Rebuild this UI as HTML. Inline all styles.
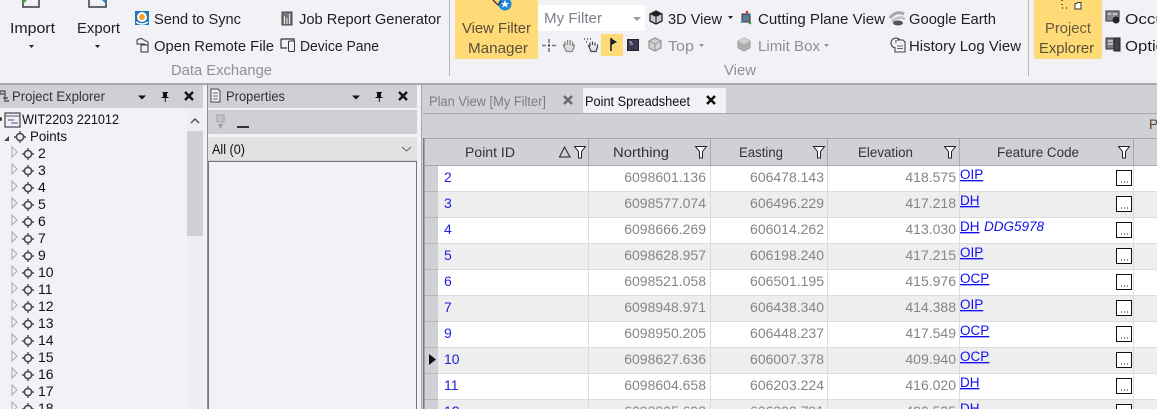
<!DOCTYPE html>
<html><head><meta charset="utf-8"><style>
html,body{margin:0;padding:0;background:#f1f1f6;width:1157px;height:409px;overflow:hidden}
svg{display:block;font-family:"Liberation Sans",sans-serif}
.r{font-size:14.5px;fill:#1e1e28}
.g{font-size:14.5px;fill:#8f8f98}
.t{font-size:13.5px;fill:#111}
.d{font-size:14px;fill:#111}
.n{font-size:14px;fill:#85858a;text-anchor:end}
.h{font-size:13.5px;fill:#333}
.l{font-size:13.5px;fill:#1010f0;text-decoration:underline}
.i{font-size:14px;fill:#2222dd}
</style></head><body>
<svg width="1157" height="409" viewBox="0 0 1157 409" xmlns="http://www.w3.org/2000/svg">
<defs>
<g id="tg"><circle cx="0" cy="0" r="3.6" fill="none" stroke="#4a4a58" stroke-width="1.6"/><path d="M0-6V-3.5M0 3.5V6M-6 0H-3.5M3.5 0H6" stroke="#4a4a58" stroke-width="1.4"/></g>
<path id="ex" d="M0-5L5 0L0 5Z" fill="#f4f4f8" stroke="#a8a8ac"/>
<path id="fl" d="M0.5 0.5H11.5L7.5 5.5V12H4.5V5.5Z" fill="#fff" stroke="#222" stroke-width="1"/>
<g id="bt"><rect x="0.5" y="0.5" width="15" height="15" fill="#fff" stroke="#111"/><path d="M5 12h1M8 12h1M11 12h1" stroke="#111"/></g>
<g id="pin"><path d="M-2.5-4H3V-3H2V1H3.5V2H.8V6H-.2V2H-3.5V1H-2V-3H-2.5Z" fill="#111"/></g>
<path id="cl" d="M-4-4L4 4M4-4L-4 4" stroke="#111" stroke-width="2.4" fill="none"/>
<path id="dd" d="M-4-1.5H4L0 2.5Z" fill="#111"/>
</defs>

<!-- ribbon -->
<rect width="1157" height="83" fill="#f1f1f6"/>
<rect y="83" width="1157" height="2" fill="#a8a8a8"/>
<path d="M23 0V7H39V0" fill="none" stroke="#3a3a46" stroke-width="1.5"/><path d="M23 0H27L23 4Z" fill="#3f9a3f"/>
<path d="M89 0V7H106V0" fill="none" stroke="#3a3a46" stroke-width="1.5"/><path d="M106 0V4L102 0Z" fill="#1e88d8"/>
<text x="10" y="33" class="r" textLength="45" lengthAdjust="spacingAndGlyphs">Import</text>
<text x="77" y="33" class="r" textLength="43" lengthAdjust="spacingAndGlyphs">Export</text>
<path d="M29 45H34L31.500 48Z M95 45H100L97.500 48Z" fill="#222"/>

<rect x="135" y="11" width="14" height="14" fill="#1e74b8"/><circle cx="142" cy="17" r="4" fill="#f5a01e" stroke="#fff" stroke-width="2"/><path d="M136 22Q142 26 148 22" stroke="#fff" stroke-width="1.500" fill="none"/>
<text x="154" y="24" class="r" textLength="87" lengthAdjust="spacingAndGlyphs">Send to Sync</text>
<path d="M137 40Q141 37 144 40L148 42V46L144 44H137Z" fill="none" stroke="#555" stroke-width="1.200"/><rect x="141" y="45" width="7" height="7" fill="#f1f1f6" stroke="#333"/>
<text x="154" y="51" class="r" textLength="120" lengthAdjust="spacingAndGlyphs">Open Remote File</text>
<rect x="282" y="12" width="10" height="13" fill="#777" stroke="#444"/><path d="M284.500 16V24M287 18V24M289.500 14V24" stroke="#eee"/>
<text x="299" y="24" class="r" textLength="142" lengthAdjust="spacingAndGlyphs">Job Report Generator</text>
<path d="M281 39H294V41M281 39V48H287" fill="none" stroke="#333" stroke-width="1.200"/><rect x="288.500" y="41" width="6" height="10.500" rx="1" fill="#f1f1f6" stroke="#333"/>
<text x="300" y="51" class="r" textLength="79" lengthAdjust="spacingAndGlyphs">Device Pane</text>
<text x="171" y="75" class="g" textLength="101" lengthAdjust="spacingAndGlyphs">Data Exchange</text>
<rect x="449" y="0" width="1" height="76" fill="#b8b8bc"/>

<rect x="455" y="0" width="83" height="59" fill="#ffdb78"/>
<circle cx="505" cy="4" r="6.500" fill="#1e88d8"/><path d="M505 0L506.200 3H509L506.800 4.800L507.600 7.500L505 6L502.400 7.500L503.200 4.800L501 3H503.800Z" fill="#fff"/><path d="M493 0L498 5L501 1" fill="none" stroke="#333" stroke-width="1.300"/>
<text x="462" y="33" class="r" style="fill:#5c4e38" textLength="69" lengthAdjust="spacingAndGlyphs">View Filter</text>
<text x="468" y="53" class="r" style="fill:#5c4e38" textLength="60" lengthAdjust="spacingAndGlyphs">Manager</text>

<rect x="538" y="5" width="107" height="26" fill="#fff"/>
<text x="544" y="23" class="r" style="fill:#7f8088" textLength="58" lengthAdjust="spacingAndGlyphs">My Filter</text>
<path d="M633 17H641L637 21Z" fill="#9a9aa0"/>
<path d="M656 11L662 14V21L656 24L650 21V14Z" fill="#c8c8d0" stroke="#222" stroke-width="1.300"/><path d="M650 14L656 17L662 14L656 11Z" fill="#222"/><path d="M656 17V24" stroke="#222"/>
<text x="668" y="24" class="r" textLength="54" lengthAdjust="spacingAndGlyphs">3D View</text>
<path d="M728 16H733L730.500 19Z" fill="#222"/>
<path d="M742 14H750V22H742Z" fill="#77777f" stroke="#333"/><path d="M741 23L750 14" stroke="#1e88d8" stroke-width="1.200"/><circle cx="747" cy="12" r="1.300" fill="#d33"/><circle cx="750" cy="23" r="1.300" fill="#3a9a3a"/>
<text x="758" y="24" class="r" textLength="127" lengthAdjust="spacingAndGlyphs">Cutting Plane View</text>
<path d="M890 18Q896 10 904 14" stroke="#a8a8a8" stroke-width="3" fill="none"/><path d="M892 22Q898 15 905 19" stroke="#c0c0c0" stroke-width="2.500" fill="none"/><ellipse cx="898" cy="23" rx="5" ry="2.500" fill="#555"/>
<text x="909" y="24" class="r" textLength="87" lengthAdjust="spacingAndGlyphs">Google Earth</text>

<path d="M549 39V43M549 48V52M542 45.500H546M552 45.500H556" stroke="#777" stroke-width="1.600"/><rect x="548" y="44.500" width="2" height="2" fill="#333"/>
<path d="M565 46V41.500M567.500 45V40M570 45V40M572.500 46V41.500M565 46L564 44.500Q563 45 564 47L566.500 51.500H572L574 47.500V44" fill="#ddd" stroke="#888" stroke-width="1.300"/>
<path d="M584 39h1M587 39h1M590 39h1M586 42h1" stroke="#222" stroke-width="1.200"/><path d="M590 46V42.500M592.500 45V41.500M595 45.500V42.500M590 46L588.500 45.500L591 51.500H596L597.500 47V44.500" fill="#e2e2ea" stroke="#444" stroke-width="1.200"/>
<rect x="601" y="34" width="22" height="22" fill="#ffdb78"/>
<path d="M611 38V51" stroke="#222" stroke-width="1.600"/><path d="M611.500 38.500L617 42L611.500 45Z" fill="#222"/>
<rect x="627.500" y="39.500" width="11" height="11" fill="#3a3a50" stroke="#222"/><path d="M629 42H632M630 44H633" stroke="#ccc"/>
<path d="M655 38L661 41V48L655 51L649 48V41Z" fill="#d2d2d2" stroke="#9a9a9a" stroke-width="1.300"/><path d="M649 41L655 44L661 41M655 44V51" stroke="#9a9a9a" fill="none"/>
<text x="668" y="51" class="g" textLength="26" lengthAdjust="spacingAndGlyphs">Top</text>
<path d="M699 44H704L701.500 47Z" fill="#8f8f98"/>
<path d="M744 38L750 41V48L744 51L738 48V41Z" fill="#b0b0b0" stroke="#9a9a9a"/><path d="M738 41L744 44L750 41L744 38Z" fill="#d4d4d4"/>
<text x="758" y="51" class="g" textLength="62" lengthAdjust="spacingAndGlyphs">Limit Box</text>
<path d="M824 44H829L826.500 47Z" fill="#8f8f98"/>
<circle cx="896" cy="43" r="5" fill="#f1f1f6" stroke="#444" stroke-width="1.100"/><path d="M896 40V43H899" stroke="#444" fill="none"/><path d="M897 40H903L905 42V52H895V47" fill="#f1f1f6" stroke="#444" stroke-width="1.100"/><path d="M897 46H903M897 48.500H903" stroke="#666"/>
<text x="909" y="51" class="r" textLength="112" lengthAdjust="spacingAndGlyphs">History Log View</text>
<text x="724" y="75" class="g" textLength="32" lengthAdjust="spacingAndGlyphs">View</text>
<rect x="1028" y="0" width="1" height="76" fill="#b8b8bc"/>

<rect x="1034" y="0" width="68" height="59" fill="#ffdb78"/>
<path d="M1062 0V1M1062 4V5M1062 8H1063M1066 8H1067" stroke="#333" stroke-width="1.400"/><path d="M1075 4L1078 2.500H1081V9H1075Z" fill="#fff" stroke="#333"/>
<text x="1045" y="33" class="r" style="fill:#6a5a40" textLength="46" lengthAdjust="spacingAndGlyphs">Project</text>
<text x="1039" y="53" class="r" style="fill:#5c4e38" textLength="55" lengthAdjust="spacingAndGlyphs">Explorer</text>
<rect x="1106" y="11" width="13" height="10" fill="#8a8a92" stroke="#333"/><circle cx="1116" cy="20" r="3.500" fill="#222"/><path d="M1108 14H1111M1113 14H1117" stroke="#fff"/>
<text x="1125" y="24" class="r" textLength="40" lengthAdjust="spacingAndGlyphs">Occu</text>
<rect x="1106" y="38" width="10" height="11" fill="#7a7a82" stroke="#333"/><rect x="1114" y="38" width="6" height="13" fill="#444" stroke="#222"/><path d="M1108 41H1113M1108 44H1113" stroke="#fff"/>
<text x="1125" y="51" class="r" textLength="40" lengthAdjust="spacingAndGlyphs">Optio</text>

<!-- panels bg -->
<rect y="85" width="1157" height="324" fill="#d0d1d6"/>
<!-- project explorer -->
<rect x="0" y="85" width="203" height="23" fill="#cfd0d5"/>
<rect x="0" y="108" width="203" height="301" fill="#f1f1f6"/>
<rect x="187" y="108" width="16" height="301" fill="#eeeef2"/>
<rect x="187" y="131" width="16" height="105" fill="#cfd0d5"/>
<path d="M191 123L195 119L199 123" fill="none" stroke="#555" stroke-width="1.500"/>
<path d="M0 91H5V94H0ZM3 98H8M5 94V102M6 101H9" fill="none" stroke="#444" stroke-width="1.200"/>
<text x="12" y="101" class="t" style="fill:#333" textLength="93" lengthAdjust="spacingAndGlyphs">Project Explorer</text>
<use href="#dd" x="142" y="97"/><use href="#pin" x="165" y="96"/><use href="#cl" x="189" y="96"/>
<circle cx="0" cy="119" r="2" fill="#333"/>
<rect x="5" y="113" width="15" height="14" fill="#eef" stroke="#444" stroke-width="1.200"/><path d="M5 116H20M8 120H14M11 123H18" stroke="#555"/>
<text x="22" y="124" class="t" textLength="97" lengthAdjust="spacingAndGlyphs">WIT2203 221012</text>
<path d="M4 141L9 136V141Z" fill="#444"/>
<use href="#tg" x="20" y="137"/>
<text x="30" y="141" class="t" textLength="37" lengthAdjust="spacingAndGlyphs">Points</text>
<g class="d">
<use href="#ex" x="12" y="152"/><use href="#tg" x="28" y="154"/><text x="38" y="158">2</text>
<use href="#ex" x="12" y="169"/><use href="#tg" x="28" y="171"/><text x="38" y="175">3</text>
<use href="#ex" x="12" y="186"/><use href="#tg" x="28" y="188"/><text x="38" y="192">4</text>
<use href="#ex" x="12" y="203"/><use href="#tg" x="28" y="205"/><text x="38" y="209">5</text>
<use href="#ex" x="12" y="220"/><use href="#tg" x="28" y="222"/><text x="38" y="226">6</text>
<use href="#ex" x="12" y="237"/><use href="#tg" x="28" y="239"/><text x="38" y="243">7</text>
<use href="#ex" x="12" y="254"/><use href="#tg" x="28" y="256"/><text x="38" y="260">9</text>
<use href="#ex" x="12" y="271"/><use href="#tg" x="28" y="273"/><text x="38" y="277">10</text>
<use href="#ex" x="12" y="288"/><use href="#tg" x="28" y="290"/><text x="38" y="294">11</text>
<use href="#ex" x="12" y="305"/><use href="#tg" x="28" y="307"/><text x="38" y="311">12</text>
<use href="#ex" x="12" y="322"/><use href="#tg" x="28" y="324"/><text x="38" y="328">13</text>
<use href="#ex" x="12" y="339"/><use href="#tg" x="28" y="341"/><text x="38" y="345">14</text>
<use href="#ex" x="12" y="356"/><use href="#tg" x="28" y="358"/><text x="38" y="362">15</text>
<use href="#ex" x="12" y="373"/><use href="#tg" x="28" y="375"/><text x="38" y="379">16</text>
<use href="#ex" x="12" y="390"/><use href="#tg" x="28" y="392"/><text x="38" y="396">17</text>
<use href="#ex" x="12" y="407"/><use href="#tg" x="28" y="409"/><text x="38" y="413">18</text>
</g>
<rect x="203" y="85" width="4" height="324" fill="#f1f1f6"/>
<rect x="207" y="85" width="1" height="324" fill="#8e8e92"/>

<!-- properties -->
<rect x="208" y="85" width="210" height="324" fill="#cfd0d5"/>
<rect x="208" y="108" width="209" height="2" fill="#f1f1f6"/>
<rect x="208" y="134" width="209" height="3" fill="#f1f1f6"/>
<path d="M211 89H218L220 91V102H211Z" fill="#f1f1f6" stroke="#444"/><path d="M213 93H218M213 96H218M213 99H218" stroke="#666"/>
<text x="226" y="101" class="t" style="fill:#333" textLength="59" lengthAdjust="spacingAndGlyphs">Properties</text>
<use href="#dd" x="356" y="97"/><use href="#pin" x="379" y="96"/><use href="#cl" x="403" y="96"/>
<rect x="217" y="115" width="7" height="7" fill="#c4c4c8" stroke="#a4a4a8"/><path d="M218 124H223L220.500 129Z" fill="#9a9a9e"/>
<rect x="237" y="126" width="12" height="2" fill="#333"/>
<rect x="208" y="137" width="209" height="23" fill="#e1e1e1"/>
<text x="212" y="154" class="t" textLength="33" lengthAdjust="spacingAndGlyphs">All (0)</text>
<path d="M402 147L406.500 151L411 147" fill="none" stroke="#666"/>
<rect x="208.500" y="161.500" width="208" height="250" fill="#f1f1f6" stroke="#777"/>
<rect x="417" y="85" width="4" height="324" fill="#f1f1f6"/>
<rect x="421" y="85" width="1" height="324" fill="#a8a8ac"/>

<!-- main area -->
<rect x="422" y="85" width="735" height="324" fill="#d0d1d6"/>
<rect x="583" y="88" width="143" height="25" fill="#f1f1f6"/>
<text x="429" y="106" class="t" style="fill:#7c7c84" textLength="117" lengthAdjust="spacingAndGlyphs">Plan View [My Filter]</text>
<use href="#cl" x="568" y="100" style="opacity:.55"/>
<text x="585" y="106" class="t" textLength="105" lengthAdjust="spacingAndGlyphs">Point Spreadsheet</text>
<use href="#cl" x="711" y="100"/>
<rect x="423" y="113" width="734" height="1" fill="#a8a8ac"/>
<rect x="423" y="138" width="734" height="1" fill="#a8a8ac"/>
<text x="1149" y="129" class="t" style="fill:#5a4020">P</text>

<!-- rows -->
<rect x="438" y="166" width="719" height="25" fill="#fff"/>
<rect x="438" y="192" width="719" height="25" fill="#eeeeee"/>
<rect x="438" y="218" width="719" height="25" fill="#fff"/>
<rect x="438" y="244" width="719" height="25" fill="#eeeeee"/>
<rect x="438" y="270" width="719" height="25" fill="#fff"/>
<rect x="438" y="296" width="719" height="25" fill="#eeeeee"/>
<rect x="438" y="322" width="719" height="25" fill="#fff"/>
<rect x="438" y="348" width="719" height="25" fill="#eeeeee"/>
<rect x="438" y="374" width="719" height="25" fill="#fff"/>
<rect x="438" y="400" width="719" height="9" fill="#eeeeee"/>
<path d="M438 191.500H1157M438 217.500H1157M438 243.500H1157M438 269.500H1157M438 295.500H1157M438 321.500H1157M438 347.500H1157M438 373.500H1157M438 399.500H1157" stroke="#dcdcdc"/>
<path d="M588.500 166V409M710.500 166V409M827.500 166V409M959.500 166V409M1133.500 166V409" stroke="#dcdcdc"/>
<path d="M424 191.500H438M424 217.500H438M424 243.500H438M424 269.500H438M424 295.500H438M424 321.500H438M424 347.500H438M424 373.500H438M424 399.500H438" stroke="#b8b8bc"/>
<rect x="423" y="138" width="1.500" height="271" fill="#77777b"/>
<rect x="424" y="165" width="733" height="1" fill="#a8a8ac"/>
<path d="M588.500 139V165M710.500 139V165M827.500 139V165M959.500 139V165M1133.500 139V165" stroke="#a8a8ac"/>
<path d="M429 354L436 359.500L429 365Z" fill="#111"/>

<!-- header -->
<text x="465" y="157" class="h" textLength="50" lengthAdjust="spacingAndGlyphs">Point ID</text>
<path d="M559.500 157L564.500 147L570 157Z" fill="none" stroke="#222"/>
<use href="#fl" x="574" y="146"/>
<text x="613" y="157" class="h" textLength="56" lengthAdjust="spacingAndGlyphs">Northing</text>
<use href="#fl" x="695" y="146"/>
<text x="739" y="157" class="h" textLength="44" lengthAdjust="spacingAndGlyphs">Easting</text>
<use href="#fl" x="813" y="146"/>
<text x="858" y="157" class="h" textLength="55" lengthAdjust="spacingAndGlyphs">Elevation</text>
<use href="#fl" x="944" y="146"/>
<text x="997" y="157" class="h" textLength="82" lengthAdjust="spacingAndGlyphs">Feature Code</text>
<use href="#fl" x="1118" y="146"/>

<!-- data -->
<text x="444" y="182" class="i">2</text><text x="706" y="182" class="n">6098601.136</text><text x="824" y="182" class="n">606478.143</text><text x="956" y="182" class="n">418.575</text><text x="960" y="179" class="l">OIP</text><use href="#bt" x="1116" y="170"/>
<text x="444" y="208" class="i">3</text><text x="706" y="208" class="n">6098577.074</text><text x="824" y="208" class="n">606496.229</text><text x="956" y="208" class="n">417.218</text><text x="960" y="205" class="l">DH</text><use href="#bt" x="1116" y="196"/>
<text x="444" y="234" class="i">4</text><text x="706" y="234" class="n">6098666.269</text><text x="824" y="234" class="n">606014.262</text><text x="956" y="234" class="n">413.030</text><text x="960" y="231" class="l">DH</text><text x="984" y="231" style="font-size:13.5px;font-style:italic;fill:#1010f0">DDG5978</text><use href="#bt" x="1116" y="222"/>
<text x="444" y="260" class="i">5</text><text x="706" y="260" class="n">6098628.957</text><text x="824" y="260" class="n">606198.240</text><text x="956" y="260" class="n">417.215</text><text x="960" y="257" class="l">OIP</text><use href="#bt" x="1116" y="248"/>
<text x="444" y="286" class="i">6</text><text x="706" y="286" class="n">6098521.058</text><text x="824" y="286" class="n">606501.195</text><text x="956" y="286" class="n">415.976</text><text x="960" y="283" class="l">OCP</text><use href="#bt" x="1116" y="274"/>
<text x="444" y="312" class="i">7</text><text x="706" y="312" class="n">6098948.971</text><text x="824" y="312" class="n">606438.340</text><text x="956" y="312" class="n">414.388</text><text x="960" y="309" class="l">OIP</text><use href="#bt" x="1116" y="300"/>
<text x="444" y="338" class="i">9</text><text x="706" y="338" class="n">6098950.205</text><text x="824" y="338" class="n">606448.237</text><text x="956" y="338" class="n">417.549</text><text x="960" y="335" class="l">OCP</text><use href="#bt" x="1116" y="326"/>
<text x="444" y="364" class="i">10</text><text x="706" y="364" class="n">6098627.636</text><text x="824" y="364" class="n">606007.378</text><text x="956" y="364" class="n">409.940</text><text x="960" y="361" class="l">OCP</text><use href="#bt" x="1116" y="352"/>
<text x="444" y="390" class="i">11</text><text x="706" y="390" class="n">6098604.658</text><text x="824" y="390" class="n">606203.224</text><text x="956" y="390" class="n">416.020</text><text x="960" y="387" class="l">DH</text><use href="#bt" x="1116" y="378"/>
<text x="444" y="416" class="i">12</text><text x="706" y="416" class="n">6098805.692</text><text x="824" y="416" class="n">606302.791</text><text x="956" y="416" class="n">420.535</text><text x="960" y="413" class="l">DH</text><use href="#bt" x="1116" y="404"/>
</svg>
</body></html>
